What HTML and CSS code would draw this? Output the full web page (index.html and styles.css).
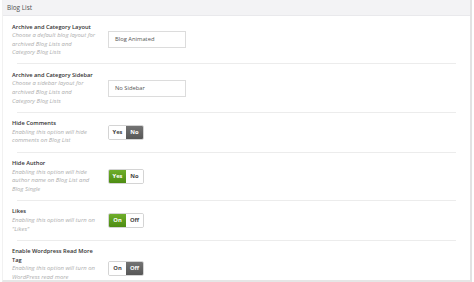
FILE: index.html
```html
<!DOCTYPE html>
<html>
<head>
<meta charset="utf-8">
<link rel="stylesheet" href="styles.css">
</head>
<body>
<div class="panel">
  <div class="panel-head">Blog List</div>
  <div class="panel-body">
    <div class="row">
      <div class="label">
        <div class="title">Archive and Category Layout</div>
        <div class="desc">Choose a default blog layout for<br>archived Blog Lists and<br>Category Blog Lists</div>
      </div>
      <div class="control"><div class="select">Blog Animated</div></div>
    </div>
    <div class="sep"></div>
    <div class="row">
      <div class="label">
        <div class="title">Archive and Category Sidebar</div>
        <div class="desc">Choose a sidebar layout for<br>archived Blog Lists and<br>Category Blog Lists</div>
      </div>
      <div class="control"><div class="select">No Sidebar</div></div>
    </div>
    <div class="sep"></div>
    <div class="row">
      <div class="label">
        <div class="title">Hide Comments</div>
        <div class="desc">Enabling this option will hide<br>comments on Blog List</div>
      </div>
      <div class="control"><div class="toggle"><span class="opt">Yes</span><span class="opt dark">No</span></div></div>
    </div>
    <div class="sep"></div>
    <div class="row">
      <div class="label">
        <div class="title">Hide Author</div>
        <div class="desc">Enabling this option will hide<br>author name on Blog List and<br>Blog Single</div>
      </div>
      <div class="control"><div class="toggle"><span class="opt green">Yes</span><span class="opt">No</span></div></div>
    </div>
    <div class="sep"></div>
    <div class="row">
      <div class="label">
        <div class="title">Likes</div>
        <div class="desc">Enabling this option will turn on<br>"Likes"</div>
      </div>
      <div class="control"><div class="toggle"><span class="opt green">On</span><span class="opt">Off</span></div></div>
    </div>
    <div class="sep"></div>
    <div class="row">
      <div class="label">
        <div class="title">Enable Wordpress Read More<br>Tag</div>
        <div class="desc">Enabling this option will turn on<br>WordPress read more<br>tag</div>
      </div>
      <div class="control"><div class="toggle"><span class="opt">On</span><span class="opt dark">Off</span></div></div>
    </div>
  </div>
</div>
</body>
</html>
```

FILE: styles.css
```css
html, body {
  margin: 0;
  padding: 0;
  background: #ffffff;
  overflow: hidden;
}
body {
  font-family: "Open Sans", "Liberation Sans", sans-serif;
  width: 474px;
  height: 282px;
}
.panel {
  margin-left: 2px;
  width: 467px;
  height: 280px;
  border-left: 1px solid #f1f1f1;
  border-right: 2px solid #e2e2e2;
  border-bottom: 2px solid #e6e6e6;
  overflow: hidden;
  background: #fff;
}
.panel-head {
  height: 15px;
  line-height: 16px;
  background: #f3f3f5;
  border-bottom: 1px solid #e9e9ec;
  font-size: 6.4px;
  color: #505050;
  padding-left: 4px;
}
.row {
  display: flex;
  align-items: center;
  padding: 6.5px 0 6.5px 9px;
}
.label {
  width: 90px;
  line-height: 8.6px;
  white-space: nowrap;
}
.title {
  font-size: 5.7px;
  font-weight: 600;
  color: #333;
}
.desc {
  font-size: 5.9px;
  font-style: italic;
  color: #adadad;
}
.control {
  margin-left: 6px;
  display: flex;
}
.select {
  width: 70px;
  height: 15px;
  line-height: 15px;
  border: 1px solid #dcdcdc;
  font-size: 5.8px;
  color: #555;
  padding-left: 6px;
}
.toggle {
  display: flex;
  height: 13px;
  border: 1px solid #d4d4d4;
  border-radius: 2px;
  overflow: hidden;
}
.opt {
  width: 17px;
  line-height: 13px;
  text-align: center;
  font-size: 5.8px;
  font-weight: 700;
  color: #444;
  background: #fff;
}
.opt.dark {
  background: linear-gradient(#737373, #575757);
  color: #fff;
}
.opt.green {
  background: linear-gradient(#6fae2b, #4d8c12);
  color: #fff;
}
.sep {
  height: 1px;
  background: #ececec;
  margin: 0 14px 0 14px;
}
```
